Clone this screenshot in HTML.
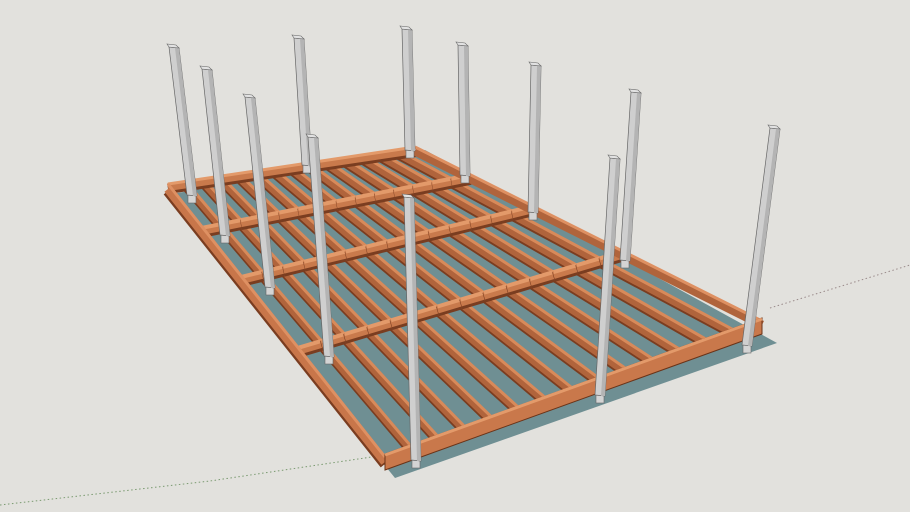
<!DOCTYPE html>
<html><head><meta charset="utf-8"><style>
html,body{margin:0;padding:0;background:#e2e1dd;width:910px;height:512px;overflow:hidden}
svg{display:block}
</style></head><body>
<svg id="s" width="910" height="512" viewBox="0 0 910 512" xmlns="http://www.w3.org/2000/svg">
<rect width="910" height="512" fill="#e2e1dd"/>
<polyline points="0,505 210,481 385,455" fill="none" stroke="#7a9a70" stroke-width="1" stroke-dasharray="1.5,2.5"/>
<polyline points="770,308 910,265" fill="none" stroke="#9a8a8a" stroke-width="1" stroke-dasharray="1.5,2.5"/>
<polygon points="166,195 395,478 777,343 425,150" fill="#6f8f93"/>
<g id="g"></g>
</svg>
<script>
var g=document.getElementById('g');
function P(u,v){var A=[168,185],B=[385,458],C=[415,148],D=[762,322];
 var x=(1-u)*(1-v)*A[0]+u*(1-v)*B[0]+(1-u)*v*C[0]+u*v*D[0];
 var y=(1-u)*(1-v)*A[1]+u*(1-v)*B[1]+(1-u)*v*C[1]+u*v*D[1];return [x,y];}
var h='';
function line(a,b,c,w,dy){h+='<line x1="'+a[0]+'" y1="'+(a[1]+dy)+'" x2="'+b[0]+'" y2="'+(b[1]+dy)+'" stroke="'+c+'" stroke-width="'+w+'"/>';}
var N=14;
for(var i=1;i<N;i++){var v=i/N;var a=P(0,v),b=P(1,v);line(a,b,'#7a3d20',9,4);line(a,b,'#b0643c',7,3);line(a,b,'#d88a5a',3,-1);}
var rows=[0.16,0.34,0.6];
rows.forEach(function(u,k){for(var i=0;i<N;i++){var a=P(u,i/N),b=P(u,(i+1)/N);line(a,b,'#7a3d20',10,4);line(a,b,'#c97a4c',8,2);line(a,b,'#e39a6a',4,-1);}});
var a=P(0,0),b=P(0,1);line(a,b,'#7a3d20',10,4);line(a,b,'#c97a4c',8,2);line(a,b,'#e39a6a',3,-1);
a=P(0,0);b=P(1,0);line(a,b,'#7a3d20',11,6);line(a,b,'#c8764a',9,4);line(a,b,'#de9062',3,-1);
a=P(0,1);b=P(1,1);line(a,b,'#b0643c',9,3);line(a,b,'#de9062',3,-1);
a=P(1,0);b=P(1,1);
h+='<polygon points="'+a[0]+','+(a[1]-4)+' '+b[0]+','+(b[1]-4)+' '+b[0]+','+(b[1]+12)+' '+a[0]+','+(a[1]+12)+'" fill="#c9784b" stroke="#6a3318" stroke-width="1"/>';
line(a,b,'#e39a6a',3,-3);
var posts=[[169,47,187,195],[202,69,220,235],[245,97,265,287],[294,38,302,165],[402,29,405,150],[458,45,460,175],[531,65,528,212],[631,92,620,260],[308,137,324,356],[610,158,595,395],[770,128,742,345],[404,197,411,460]];
posts.forEach(function(p){var w=10;
 h+='<rect x="'+(p[2]+1)+'" y="'+(p[3])+'" width="8" height="8" fill="#d4d4d4" stroke="#666" stroke-width="0.6"/>';
 h+='<polygon points="'+p[0]+','+p[1]+' '+(p[0]+w)+','+(p[1]+1)+' '+(p[2]+w)+','+(p[3]+1)+' '+p[2]+','+p[3]+'" fill="#cfcfcf" stroke="#666" stroke-width="0.7"/>';
 h+='<polygon points="'+(p[0]+w*0.6)+','+(p[1]+1)+' '+(p[0]+w)+','+(p[1]+1)+' '+(p[2]+w)+','+(p[3]+1)+' '+(p[2]+w*0.6)+','+(p[3]+1)+'" fill="#b4b4b4"/>';
 h+='<polygon points="'+p[0]+','+p[1]+' '+(p[0]+w)+','+(p[1]+1)+' '+(p[0]+w*0.7)+','+(p[1]-2)+' '+(p[0]-2)+','+(p[1]-3)+'" fill="#e2e2e2" stroke="#666" stroke-width="0.6"/>';});
g.innerHTML=h;
</script>
</body></html>
